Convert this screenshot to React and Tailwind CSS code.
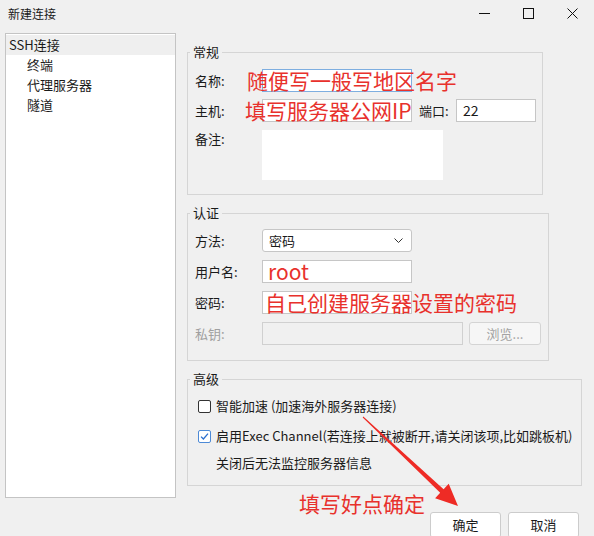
import React from "react";

const RED = "text-[#e8312c]";

const Row = ({ label, children, muted }) => (
  <div className="flex items-center h-[23px]">
    <div className={`w-[67px] leading-[18px] ${muted ? "text-[#a0a0a0]" : ""}`}>{label}</div>
    {children}
  </div>
);

const Group = ({ title, className = "", children }) => (
  <fieldset className={`border border-[#d5d5d5] ${className}`}>
    <legend className="ml-[2px] px-[3px] leading-[18px]">{title}</legend>
    {children}
  </fieldset>
);

const Check = ({ checked }) => (
  <span
    className={`w-[13px] h-[13px] shrink-0 rounded-[2px] border bg-white flex items-center justify-center ${
      checked ? "border-[#4d8ad6]" : "border-[#333333]"
    }`}
  >
    {checked && (
      <svg width="11" height="11" viewBox="0 0 11 11">
        <path d="M2 5.6 L4.4 8 L9 2.6" fill="none" stroke="#2a6fcf" strokeWidth="1.3" />
      </svg>
    )}
  </span>
);

export default function App() {
  return (
    <div className="relative w-[594px] h-[536px] overflow-hidden bg-[#f0f0f0] text-[13px] text-[#1a1a1a] font-[family-name:'Noto_Sans_CJK_SC','Noto_Sans',sans-serif]">
      {/* title bar */}
      <div className="h-[33px] flex justify-between">
        <div className="pl-[8px] pt-[5px] text-[12px] leading-[18px]">新建连接</div>
        <div className="flex h-[26px]">
          <div className="w-[44px] flex items-center justify-center">
            <svg width="11" height="11" viewBox="0 0 11 11">
              <path d="M0 5.5 H11" stroke="#111" strokeWidth="1" />
            </svg>
          </div>
          <div className="w-[44px] flex items-center justify-center">
            <svg width="11" height="11" viewBox="0 0 11 11">
              <rect x="0.5" y="0.5" width="10" height="10" fill="none" stroke="#111" strokeWidth="1" />
            </svg>
          </div>
          <div className="w-[44px] flex items-center justify-center">
            <svg width="11" height="11" viewBox="0 0 11 11">
              <path d="M0.5 0.5 L10.5 10.5 M10.5 0.5 L0.5 10.5" stroke="#111" strokeWidth="1" />
            </svg>
          </div>
        </div>
      </div>

      {/* body */}
      <div className="flex items-start">
        <div className="ml-[5px] w-[171px] h-[465px] border border-[#c4c4c4] bg-white pt-[1px]">
          <div className="h-[20px] bg-[#efefef] pl-[3px] leading-[20px]">SSH连接</div>
          <div className="h-[20px] pl-[21px] leading-[20px]">终端</div>
          <div className="h-[20px] pl-[21px] leading-[20px]">代理服务器</div>
          <div className="h-[20px] pl-[21px] leading-[20px]">隧道</div>
        </div>

        <div className="ml-[11px] flex flex-col">
          <Group title="常规" className="mt-[10px] w-[356px] h-[152px]">
            <div className="pl-[7px] pt-[8px] flex flex-col gap-[7px]">
              <Row label="名称:">
                <div className="w-[150px] h-[23px] border border-[#7eaee0] bg-white" />
              </Row>
              <Row label="主机:">
                <div className="w-[150px] h-[23px] border border-[#c6c6c6] bg-white" />
                <div className="ml-[7px] w-[37px] leading-[18px]">端口:</div>
                <div className="w-[80px] h-[23px] border border-[#c6c6c6] bg-white pl-[6px] leading-[21px] text-[14px]">
                  22
                </div>
              </Row>
              <div className="flex items-start mt-[1px]">
                <div className="w-[67px] leading-[18px]">备注:</div>
                <div className="w-[181px] h-[50px] bg-white" />
              </div>
            </div>
          </Group>

          <Group title="认证" className="mt-[9px] w-[362px] h-[157px]">
            <div className="pl-[7px] pt-[7px] flex flex-col gap-[8px]">
              <Row label="方法:">
                <div className="w-[150px] h-[23px] border border-[#c6c6c6] rounded-[3px] bg-white flex items-center justify-between pl-[6px] pr-[8px]">
                  <span className="leading-[18px]">密码</span>
                  <svg width="9" height="5" viewBox="0 0 9 5">
                    <path d="M0.5 0.5 L4.5 4.5 L8.5 0.5" fill="none" stroke="#333" strokeWidth="1" />
                  </svg>
                </div>
              </Row>
              <Row label="用户名:">
                <div className="w-[150px] h-[23px] border border-[#c6c6c6] bg-white" />
              </Row>
              <Row label="密码:">
                <div className="w-[150px] h-[23px] border border-[#c6c6c6] bg-white" />
              </Row>
              <Row label="私钥:" muted>
                <div className="w-[201px] h-[23px] border border-[#d0d0d0] bg-[#f0f0f0]" />
                <div className="ml-[6px] w-[72px] h-[23px] border border-[#d4d4d4] rounded-[3px] bg-[#f6f6f6] flex items-center justify-center text-[#a3a3a3]">
                  浏览...
                </div>
              </Row>
            </div>
          </Group>

          <Group title="高级" className="mt-[9px] w-[395px] h-[116px]">
            <div className="pl-[10px] pt-[8px] flex flex-col">
              <div className="flex items-center h-[20px] gap-[5px]">
                <Check />
                <span className="leading-[18px]">智能加速 (加速海外服务器连接)</span>
              </div>
              <div className="flex items-center h-[20px] gap-[5px] mt-[10px]">
                <Check checked />
                <span className="leading-[18px] whitespace-nowrap">
                  启用Exec Channel(若连接上就被断开,请关闭该项,比如跳板机)
                </span>
              </div>
              <div className="h-[20px] pl-[18px] leading-[20px] mt-[7px]">关闭后无法监控服务器信息</div>
            </div>
          </Group>
        </div>
      </div>

      {/* footer */}
      <div className="flex justify-end gap-[7px] pr-[15px] mt-[14px]">
        <button className="w-[71px] h-[26px] border border-[#cccccc] rounded-[3px] bg-white leading-[24px]">
          确定
        </button>
        <button className="w-[71px] h-[26px] border border-[#cccccc] rounded-[3px] bg-white leading-[24px]">
          取消
        </button>
      </div>

      {/* annotations */}
      <span className={`absolute left-[247px] top-[68px] text-[21px] leading-[24px] whitespace-nowrap ${RED}`}>
        随便写一般写地区名字
      </span>
      <span className={`absolute left-[245px] top-[98px] text-[21px] leading-[24px] whitespace-nowrap ${RED}`}>
        填写服务器公网IP
      </span>
      <span className={`absolute left-[268px] top-[259px] text-[21px] leading-[24px] whitespace-nowrap ${RED}`}>
        root
      </span>
      <span className={`absolute left-[265px] top-[290px] text-[21px] leading-[24px] whitespace-nowrap ${RED}`}>
        自己创建服务器设置的密码
      </span>
      <span className={`absolute left-[299px] top-[491px] text-[21px] leading-[24px] whitespace-nowrap ${RED}`}>
        填写好点确定
      </span>
      <svg className="absolute inset-0 pointer-events-none" width="594" height="536" viewBox="0 0 594 536">
        <polygon
          points="363.3,416.6 443.6,489.2 448.7,483.7 458,506 435.1,498.3 440.2,492.8 362.7,417.4"
          fill="#ee2b25"
        />
      </svg>
    </div>
  );
}
